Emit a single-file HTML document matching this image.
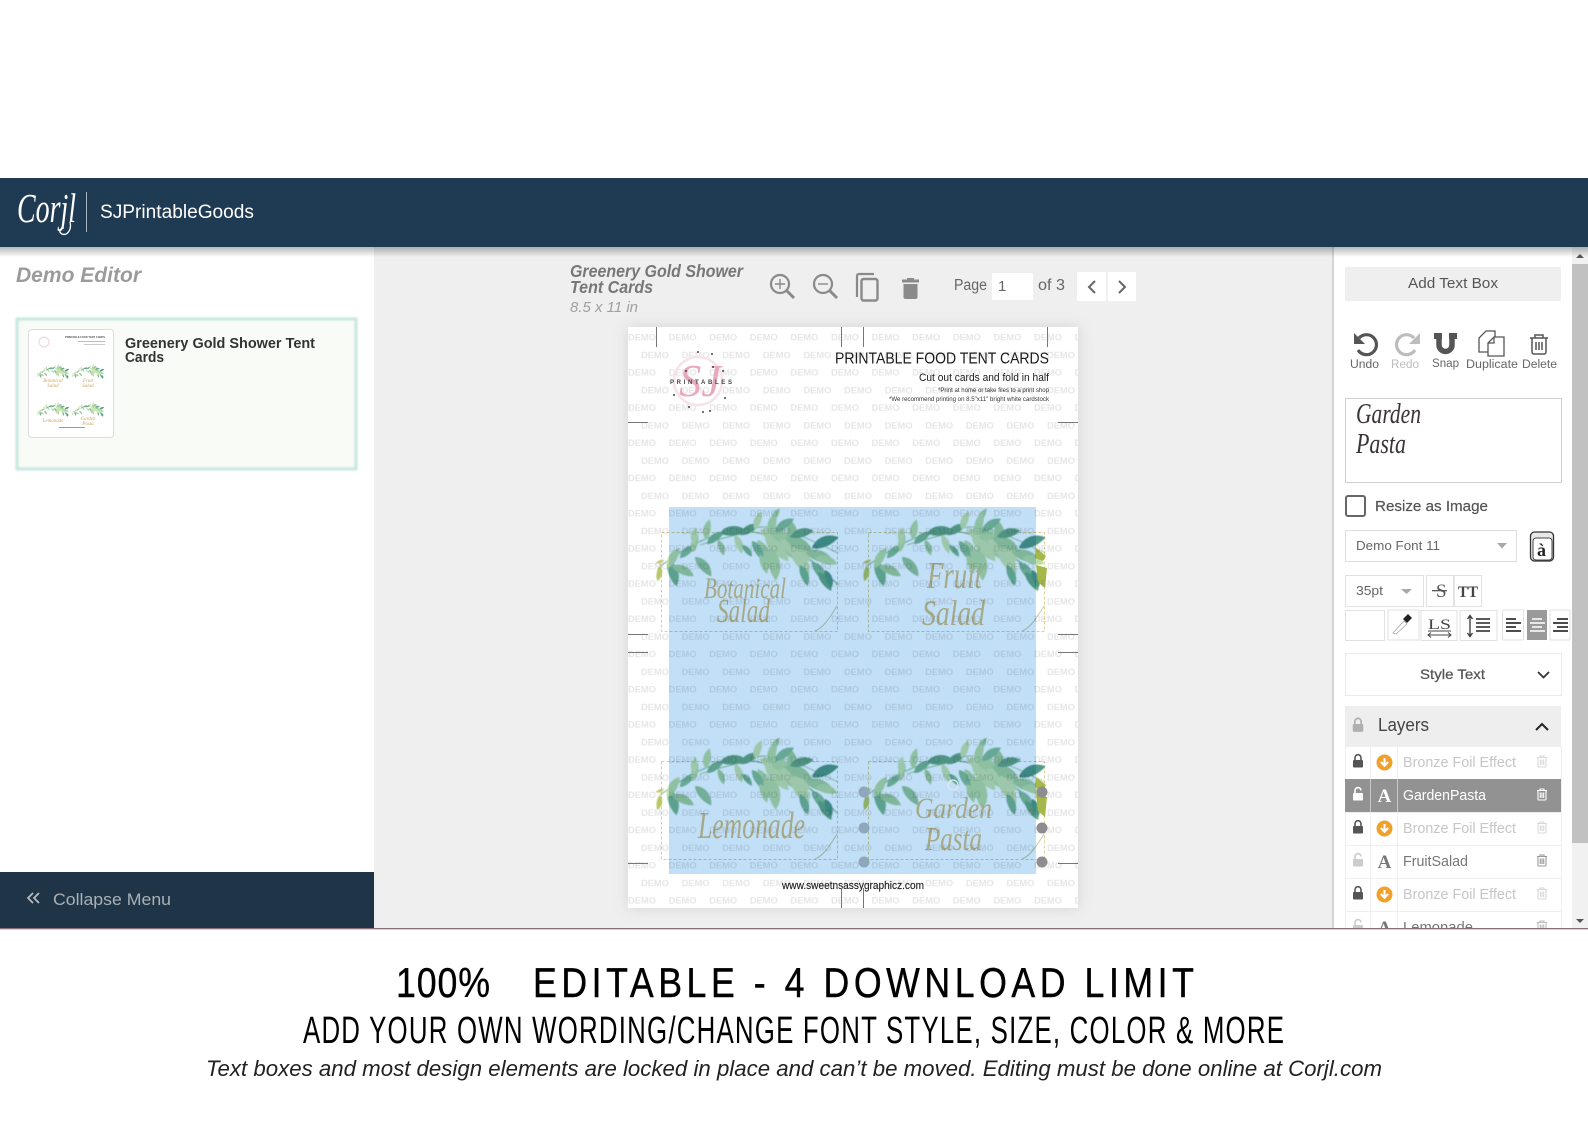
<!DOCTYPE html>
<html><head><meta charset="utf-8"><title>Corjl Demo Editor</title>
<style>
html,body{margin:0;padding:0;background:#fff;width:1588px;height:1134px;overflow:hidden}
svg{display:block;position:absolute;left:0;top:0;font-family:"Liberation Sans",sans-serif}
</style></head><body>
<svg xmlns="http://www.w3.org/2000/svg" width="1588" height="1134" viewBox="0 0 1588 1134">
<defs>
<filter id="b2" x="-10%" y="-10%" width="120%" height="120%"><feGaussianBlur stdDeviation="7"/></filter>
<filter id="b1" x="-5%" y="-5%" width="110%" height="110%"><feGaussianBlur stdDeviation="1"/></filter>
<filter id="soft"><feGaussianBlur stdDeviation=".4"/></filter>
<linearGradient id="hs" x1="0" y1="0" x2="0" y2="1"><stop offset="0" stop-color="#000" stop-opacity=".28"/><stop offset="1" stop-color="#000" stop-opacity="0"/></linearGradient>
<pattern id="demo" patternUnits="userSpaceOnUse" x="620" y="327" width="40.6" height="35.2">
<g font-weight="700" font-size="9.5" fill="#e6e6e8" font-family="Liberation Sans,sans-serif">
<text x="8" y="13.6" textLength="28" lengthAdjust="spacingAndGlyphs">DEMO</text>
<text x="21" y="31.2" textLength="28" lengthAdjust="spacingAndGlyphs">DEMO</text>
<text x="-19.6" y="31.2" textLength="28" lengthAdjust="spacingAndGlyphs">DEMO</text>
</g></pattern>
<clipPath id="pg"><rect x="628" y="327" width="450" height="581"/></clipPath>
<clipPath id="pnl"><rect x="1333" y="250" width="240" height="678"/></clipPath>
<path id="l" d="M0 0C5-6 15-7 22 0C15 4 5 4 0 0Z"/>
<g id="wreath" filter="url(#soft)">
<path d="M660 566C680 552 700 538 728 532C762 526 800 545 838 585" fill="none" stroke="#86bf9b" stroke-width="1.1"/>
<path d="M700 545C715 540 735 535 750 532M742 532C770 520 790 530 838 553M760 533C790 545 815 560 830 580" fill="none" stroke="#98c79f" stroke-width=".9"/>
<use href="#l" transform="translate(760 530) rotate(30) scale(1.8)" fill="#cfe4b0"/>
<use href="#l" transform="translate(770 525) rotate(55) scale(1.9)" fill="#bcdca8"/>
<use href="#l" transform="translate(780 540) rotate(35) scale(1.7)" fill="#cfe4b0"/>
<use href="#l" transform="translate(758 540) rotate(70) scale(1.4)" fill="#bcdca8"/>
<use href="#l" transform="translate(790 520) rotate(85) scale(1.3)" fill="#a8d0a0"/>
<use href="#l" transform="translate(772 522) rotate(-60) scale(.7)" fill="#a8d0a0"/>
<use href="#l" transform="translate(668 560) rotate(72) scale(1.25)" fill="#7ab895"/>
<use href="#l" transform="translate(664 560) rotate(160) scale(.4)" fill="#c8c878"/>
<use href="#l" transform="translate(660 566) rotate(100) scale(.7)" fill="#b8c868"/>
<use href="#l" transform="translate(668 568) rotate(-60) scale(1.05)" fill="#bcdca8"/>
<use href="#l" transform="translate(672 566) rotate(25) scale(1.1)" fill="#a8d0a0"/>
<use href="#l" transform="translate(680 558) rotate(-40) scale(.9)" fill="#86bf9b"/>
<use href="#l" transform="translate(695 557) rotate(50) scale(1.15)" fill="#98c79f"/>
<use href="#l" transform="translate(693 552) rotate(-75) scale(.85)" fill="#bcdca8"/>
<use href="#l" transform="translate(694 545) rotate(-85) scale(.8)" fill="#cfe4b0"/>
<use href="#l" transform="translate(706 540) rotate(-80) scale(.95)" fill="#bcdca8"/>
<use href="#l" transform="translate(707 544) rotate(-35) scale(.95)" fill="#7ab895"/>
<use href="#l" transform="translate(718 540) rotate(70) scale(.75)" fill="#a8d0a0"/>
<use href="#l" transform="translate(720 533) rotate(-5) scale(1.2)" fill="#68a988"/>
<use href="#l" transform="translate(740 535) rotate(-28) scale(1)" fill="#68a988"/>
<use href="#l" transform="translate(735 535) rotate(70) scale(.9)" fill="#cfe4b0"/>
<use href="#l" transform="translate(752 541) rotate(60) scale(1)" fill="#86bf9b"/>
<use href="#l" transform="translate(755 530) rotate(-70) scale(.9)" fill="#cfe4b0"/>
<use href="#l" transform="translate(770 535) rotate(-75) scale(1.05)" fill="#bcdca8"/>
<use href="#l" transform="translate(775 532) rotate(-35) scale(1.05)" fill="#86bf9b"/>
<use href="#l" transform="translate(765 538) rotate(45) scale(1.5)" fill="#cfe4b0"/>
<use href="#l" transform="translate(770 548) rotate(80) scale(1.5)" fill="#bcdca8"/>
<use href="#l" transform="translate(785 538) rotate(25) scale(1.35)" fill="#a8d0a0"/>
<use href="#l" transform="translate(790 537) rotate(-15) scale(1.1)" fill="#68a988"/>
<use href="#l" transform="translate(790 548) rotate(55) scale(1.5)" fill="#cfe4b0"/>
<use href="#l" transform="translate(812 548) rotate(-22) scale(1.3)" fill="#4f9a88"/>
<use href="#l" transform="translate(805 552) rotate(20) scale(1.4)" fill="#a8d0a0"/>
<use href="#l" transform="translate(812 562) rotate(55) scale(1.1)" fill="#86bf9b"/>
<use href="#l" transform="translate(818 572) rotate(55) scale(1.05)" fill="#68a988"/>
<use href="#l" transform="translate(800 565) rotate(70) scale(1)" fill="#7ab895"/>
<use href="#l" transform="translate(815 558) rotate(15) scale(1.05)" fill="#bcdca8"/>
<use href="#l" transform="translate(825 570) rotate(70) scale(.85)" fill="#4f9a88"/>
<use href="#l" transform="translate(760 555) rotate(70) scale(.9)" fill="#bcdca8"/>
<use href="#l" transform="translate(742 545) rotate(50) scale(.7)" fill="#7ab895"/>
</g>
<g id="lk"><rect x="-5" y="-1" width="10" height="7.5" rx="1"/><path d="M-3-1v-2.3a3 3 0 0 1 6 0v2.3" fill="none" stroke="currentColor" stroke-width="1.6"/></g>
<g id="ul"><rect x="-5" y="-1" width="10" height="7.5" rx="1"/><path d="M-3-1v-2.3a3 3 0 0 1 6-.3" fill="none" stroke="currentColor" stroke-width="1.6"/></g>
<g id="tr" fill="none" stroke="currentColor" stroke-width="1.1"><path d="M-5-3.5h10M-2-3.5v-1.5h4v1.5M-4-3.5v8.5a1 1 0 0 0 1 1h6a1 1 0 0 0 1-1v-8.5M-1.7-1.5v5.5M0-1.5v5.5M1.7-1.5v5.5"/></g>
<g id="dl"><circle r="8" fill="#f0a12a"/><path d="M0-4.5v7.5M-3.6-.5L0 3.2 3.6-.5" fill="none" stroke="#fff" stroke-width="2.1"/></g>
</defs>

<rect width="1588" height="1134" fill="#fff"/>
<g style="filter:blur(.35px)">
<rect x="0" y="178" width="1588" height="752" fill="#fff"/>
<rect x="374" y="247" width="960" height="681" fill="#efefef"/>
<rect x="0" y="247" width="374" height="681" fill="#fff"/>

<!-- left panel -->
<text x="16" y="282" font-size="21" font-weight="700" font-style="italic" fill="#9b9b9b" textLength="125" lengthAdjust="spacingAndGlyphs">Demo Editor</text>
<rect x="17" y="319" width="339" height="150" fill="#f9fbf6" stroke="#b7e2da" stroke-width="2.5" filter="url(#b1)"/>
<rect x="28.500" y="329.500" width="85" height="108" rx="3" fill="#fff" stroke="#dcdcdc"/>
<text x="65" y="338" font-size="2.600" font-weight="700" fill="#555" textLength="40" lengthAdjust="spacingAndGlyphs">PRINTABLE FOOD TENT CARDS</text>
<rect x="78" y="341" width="27" height="1" fill="#bbb"/><rect x="84" y="344" width="21" height="1" fill="#ccc"/>
<circle cx="44" cy="342" r="5" fill="none" stroke="#f0d0dc"/>
<g transform="translate(37.500 366) scale(.175) translate(-657 -518)"><use href="#wreath"/></g>
<g transform="translate(72.500 366) scale(.175) translate(-657 -518)"><use href="#wreath"/></g>
<g transform="translate(37.500 404) scale(.175) translate(-657 -518)"><use href="#wreath"/></g>
<g transform="translate(72.500 404) scale(.175) translate(-657 -518)"><use href="#wreath"/></g>
<g fill="#c9a860" font-size="5" font-family="Liberation Serif,serif" font-style="italic" text-anchor="middle">
<text x="53" y="382">Botanical</text><text x="53" y="387">Salad</text><text x="88" y="382">Fruit</text><text x="88" y="387">Salad</text>
<text x="53" y="422">Lemonade</text><text x="88" y="420">Garden</text><text x="88" y="425">Pasta</text></g>
<rect x="59" y="427" width="26" height="1" fill="#999"/>
<text x="125" y="348" font-size="14.500" font-weight="700" fill="#333" textLength="190" lengthAdjust="spacingAndGlyphs">Greenery Gold Shower Tent</text>
<text x="125" y="362" font-size="14.500" font-weight="700" fill="#333" textLength="39" lengthAdjust="spacingAndGlyphs">Cards</text>

<rect x="0" y="872" width="374" height="56" fill="#1f3547"/>
<path d="M33 893l-5 5 5 5M39 893l-5 5 5 5" fill="none" stroke="#b8bfc5" stroke-width="1.700"/>
<text x="53" y="905" font-size="17" fill="#a9b0b6" textLength="118" lengthAdjust="spacingAndGlyphs">Collapse Menu</text>

<!-- toolbar -->
<g fill="#777" font-style="italic" font-weight="700">
<text x="570" y="277" font-size="17.500" textLength="173" lengthAdjust="spacingAndGlyphs">Greenery Gold Shower</text>
<text x="570" y="293" font-size="17.500" textLength="83" lengthAdjust="spacingAndGlyphs">Tent Cards</text></g>
<text x="570" y="312" font-size="15" font-style="italic" fill="#a0a0a0" textLength="68" lengthAdjust="spacingAndGlyphs">8.5 x 11 in</text>
<g fill="none" stroke="#8a8a8a" stroke-width="2.200">
<circle cx="780" cy="284" r="9"/><path d="M786.500 290.500L794 298" stroke-width="3"/><path d="M775 284h10M780 279v10" stroke-width="1.400"/>
<circle cx="823" cy="284" r="9"/><path d="M829.500 290.500L837 298" stroke-width="3"/><path d="M818 284h10" stroke-width="1.400"/>
<path d="M857 297v-21a2 2 0 0 1 2-2h15" stroke-width="2.200"/><rect x="861.500" y="279" width="16" height="21.500" rx="2" stroke-width="2.400"/>
</g>
<path d="M902 279.500h5v-1.500h7v1.500h5v3h-17zM903.500 284h14v13a2 2 0 0 1-2 2h-10a2 2 0 0 1-2-2z" fill="#8a8a8a"/>
<text x="954" y="290" font-size="15.500" fill="#666" textLength="33" lengthAdjust="spacingAndGlyphs">Page</text>
<rect x="992" y="273" width="41" height="27" fill="#fff"/>
<text x="998" y="291" font-size="15" fill="#666">1</text>
<text x="1038" y="290" font-size="15.500" fill="#666" textLength="27" lengthAdjust="spacingAndGlyphs">of 3</text>
<rect x="1077" y="272" width="29" height="29" fill="#fff"/><rect x="1108" y="272" width="28" height="29" fill="#fff"/>
<path d="M1095 281l-6 6 6 6M1119 281l6 6-6 6" fill="none" stroke="#666" stroke-width="2"/>

<!-- sheet -->
<rect x="628" y="327" width="450" height="581" fill="#bbb" opacity=".55" filter="url(#b2)"/>
<rect x="628" y="327" width="450" height="581" fill="#fff"/>
<g clip-path="url(#pg)">
<g fill="none" stroke="#dccf98" stroke-width="1" stroke-dasharray="3 2">
<rect x="661.500" y="532.500" width="176" height="99"/><rect x="868.500" y="532.500" width="176" height="99"/>
<rect x="661.500" y="761.500" width="176" height="98"/><rect x="868.500" y="761.500" width="176" height="98"/></g>
<path d="M815 631c8-3 14-12 22-25M1022 631c8-3 14-12 22-25M815 859c8-3 14-12 22-25M1022 859c8-3 14-12 22-25" fill="none" stroke="#cdcba8"/>
<use href="#wreath"/>
<use href="#wreath" transform="translate(207 0)"/>
<use href="#wreath" transform="translate(0 229)"/>
<use href="#wreath" transform="translate(207 229)"/>
<path d="M1036 548l10 8-3 5-8-3zM1036 565l11 3-2 20-7-6z" fill="#a6b84a"/>
<path d="M1036 777l10 8-3 5-8-3zM1036 794l11 3-2 20-7-6z" fill="#a6b84a"/>
<g font-family="Liberation Serif,serif" font-style="italic" fill="#dcc18c">
<text x="704" y="598" textLength="82" lengthAdjust="spacingAndGlyphs" font-size="30">Botanical</text>
<text x="717" y="622" textLength="53" lengthAdjust="spacingAndGlyphs" font-size="34">Salad</text>
<text x="927" y="588" textLength="55" lengthAdjust="spacingAndGlyphs" font-size="38">Fruit</text>
<text x="922" y="625" textLength="63" lengthAdjust="spacingAndGlyphs" font-size="36">Salad</text>
<text x="698" y="838" textLength="107" lengthAdjust="spacingAndGlyphs" font-size="38">Lemonade</text>
<text x="915" y="818" textLength="77" lengthAdjust="spacingAndGlyphs" font-size="30">Garden</text>
<text x="925" y="850" textLength="57" lengthAdjust="spacingAndGlyphs" font-size="34">Pasta</text></g>
<rect x="620" y="327" width="470" height="581" fill="url(#demo)" style="mix-blend-mode:multiply"/>
<text x="835" y="363.500" font-size="15.500" fill="#1a1a1a" textLength="214" lengthAdjust="spacingAndGlyphs">PRINTABLE FOOD TENT CARDS</text>
<text x="919" y="381" font-size="11" fill="#1a1a1a" textLength="130" lengthAdjust="spacingAndGlyphs">Cut out cards and fold in half</text>
<text x="938" y="392" font-size="6" fill="#333" textLength="111" lengthAdjust="spacingAndGlyphs">*Print at home or take files to a print shop</text>
<text x="889" y="401" font-size="6" fill="#333" textLength="160" lengthAdjust="spacingAndGlyphs">*We recommend printing on 8.5"x11" bright white cardstock</text>
<circle cx="698" cy="381" r="24" fill="none" stroke="#f6e2e9" stroke-width="2.500"/>
<text x="679" y="396" font-family="Liberation Serif,serif" font-style="italic" font-size="46" fill="#e8a9c0" textLength="42" lengthAdjust="spacingAndGlyphs">SJ</text>
<text x="670" y="384" font-size="6" font-weight="700" fill="#444" textLength="62">PRINTABLES</text>
<g fill="#444"><circle cx="686" cy="371" r="1"/><circle cx="698" cy="352" r="1"/><circle cx="723" cy="371" r="1"/><circle cx="713" cy="367" r="1"/><circle cx="674" cy="395" r="1"/><circle cx="725" cy="398" r="1"/><circle cx="689" cy="407" r="1"/><circle cx="710" cy="411" r="1"/><circle cx="703" cy="412" r="1"/><circle cx="712" cy="354" r="1"/></g>
<text x="782" y="889" font-size="10.800" fill="#222" stroke="#222" stroke-width=".15" textLength="142" lengthAdjust="spacingAndGlyphs">www.sweetnsassygraphicz.com</text>
<rect x="669" y="507" width="367" height="367" fill="#c1dff6" style="mix-blend-mode:multiply"/>
<g fill="#8d8d8f"><circle cx="1042" cy="792" r="5.500"/><circle cx="1042" cy="828" r="5.500"/><circle cx="1042" cy="862" r="5.500"/></g>
<g fill="#8fa6bb"><circle cx="864" cy="792" r="5.500"/><circle cx="864" cy="828" r="5.500"/><circle cx="864" cy="862" r="5.500"/></g>
<circle cx="953" cy="785" r="5" fill="none" stroke="#dfe9ee" stroke-width="1.200"/>
<g stroke="#777" stroke-width="1" fill="none">
<path d="M656.500 327v20M841.500 327v20M863.500 327v20M1047.500 327v20M841.500 888v20M863.500 888v20"/>
<path d="M628 422.500h20M1058 422.500h20M628 634.500h20M1058 634.500h20M628 652.500h20M1058 652.500h20M628 863.500h20M1058 863.500h20"/></g>
</g>

<!-- right panel -->
<rect x="1332" y="247" width="2" height="681" fill="#d4d4d4"/>
<rect x="1334" y="247" width="238" height="681" fill="#fff"/>
<rect x="1572" y="247" width="16" height="681" fill="#f1f1f1"/>
<rect x="1572" y="264" width="16" height="579" fill="#c1c1c1"/>
<path d="M1580 254l-4 4h8zM1580 923l-4-4h8z" fill="#555"/>
<rect x="1345" y="267" width="216" height="34" fill="#efefef"/>
<text x="1408" y="288" font-size="15" fill="#555" textLength="90" lengthAdjust="spacingAndGlyphs">Add Text Box</text>

<path d="M1359 338a10 10 0 1 1-1 12" fill="none" stroke="#555" stroke-width="3.200"/>
<path d="M1354 333v11h11z" fill="#555"/>
<path d="M1414 338a10 10 0 1 0 1 12" fill="none" stroke="#bdbdbd" stroke-width="3.200"/>
<path d="M1420 333v11h-11z" fill="#bdbdbd"/>
<path d="M1439 338v7a6.500 6.500 0 0 0 13 0v-7" fill="none" stroke="#555" stroke-width="5.500"/>
<rect x="1434" y="333" width="8" height="6" fill="#555"/><rect x="1449" y="333" width="8" height="6" fill="#555"/>
<path d="M1488 352h-9v-14l7-7h9v6" fill="none" stroke="#555" stroke-width="1.300"/>
<path d="M1494 337h10v19h-16v-13z" fill="#fff" stroke="#555" stroke-width="1.300"/><path d="M1494 337v6h-6" fill="none" stroke="#555" stroke-width="1.200"/>
<path d="M1530 338h18M1535 338v-3h8v3M1532 338v14a2 2 0 0 0 2 2h10a2 2 0 0 0 2-2v-14M1536 342v8M1539 342v8M1542 342v8" fill="none" stroke="#555" stroke-width="1.500"/>
<g font-size="11.500" fill="#666" font-weight="400">
<text x="1350" y="368" textLength="29" lengthAdjust="spacingAndGlyphs">Undo</text>
<text x="1391" y="368" textLength="28" fill="#bcbcbc" lengthAdjust="spacingAndGlyphs">Redo</text>
<text x="1432" y="367" textLength="27" lengthAdjust="spacingAndGlyphs">Snap</text>
<text x="1466" y="368" textLength="52" lengthAdjust="spacingAndGlyphs">Duplicate</text>
<text x="1522" y="368" textLength="35" lengthAdjust="spacingAndGlyphs">Delete</text></g>

<rect x="1345.500" y="398.500" width="216" height="84" fill="#fff" stroke="#cfcfcf"/>
<g font-family="Liberation Serif,serif" font-style="italic" fill="#3a3434">
<text x="1356" y="423" font-size="29" textLength="65" lengthAdjust="spacingAndGlyphs">Garden</text>
<text x="1356" y="453" font-size="29" textLength="50" lengthAdjust="spacingAndGlyphs">Pasta</text></g>

<rect x="1346" y="496" width="19" height="20" rx="2" fill="#fff" stroke="#666" stroke-width="2"/>
<text x="1375" y="511" font-size="15" fill="#555" stroke="#555" stroke-width=".2" textLength="113" lengthAdjust="spacingAndGlyphs">Resize as Image</text>
<rect x="1345.500" y="530.500" width="171" height="31" fill="#fff" stroke="#dedede"/>
<text x="1356" y="550" font-size="13" fill="#666" textLength="84" lengthAdjust="spacingAndGlyphs">Demo Font 11</text>
<path d="M1497 543h10l-5 5.500z" fill="#a8a8a8"/>
<rect x="1530.500" y="532" width="23" height="29" rx="4" fill="#e8e8e8" stroke="#333" stroke-width="1.300"/>
<rect x="1533" y="538" width="19" height="22" rx="3" fill="#fff" stroke="#444"/>
<text x="1537" y="556" font-size="18" font-weight="700" fill="#222" font-family="Liberation Serif,serif">à</text>

<g fill="#fff" stroke="#e2e2e2">
<rect x="1345.500" y="575.500" width="78" height="31"/>
<rect x="1426.500" y="575.500" width="27" height="31"/>
<rect x="1454.500" y="575.500" width="27" height="31"/>
<rect x="1345.500" y="610.500" width="39" height="30"/>
<rect x="1388" y="610" width="31" height="30"/>
<rect x="1421" y="610.500" width="36" height="30"/>
<rect x="1460" y="610.500" width="37" height="30"/>
<rect x="1502.500" y="610" width="21" height="30" rx="1"/>
<rect x="1550" y="610" width="20" height="30" rx="1"/></g>
<rect x="1527" y="610" width="20" height="30" fill="#9a9a9a"/>
<text x="1356" y="595" font-size="13" fill="#666" textLength="27" lengthAdjust="spacingAndGlyphs">35pt</text>
<path d="M1401 589h11l-5.500 5z" fill="#a8a8a8"/>
<text x="1436" y="597" font-size="19" fill="#555" font-family="Liberation Serif,serif">S</text>
<rect x="1432" y="590" width="15" height="1.300" fill="#555"/>
<text x="1458" y="597" font-size="16" font-weight="700" fill="#444" font-family="Liberation Serif,serif" textLength="20" lengthAdjust="spacingAndGlyphs">TT</text>
<path d="M1396 634l-3-1 11-12 3 3z" fill="#fff" stroke="#aaa" stroke-width=".8"/><path d="M1403 619l5-5 4 4-5 5z" fill="#222"/>
<text x="1428" y="629" font-size="15" fill="#444" font-family="Liberation Serif,serif" textLength="23" lengthAdjust="spacingAndGlyphs">LS</text>
<path d="M1428 631h23M1428 635h23M1431 632.500l-3 2.500 3 2.500M1448 632.500l3 2.500-3 2.500" fill="none" stroke="#444"/>
<path d="M1470 616v20M1467.500 619l2.500-3.500 2.500 3.500M1467.500 633l2.500 3.500 2.500-3.500" fill="none" stroke="#444" stroke-width="1.400"/>
<path d="M1476 619h14M1476 623h14M1476 627h14M1476 631h14" stroke="#444" stroke-width="1.700"/>
<path d="M1506 619h10M1506 623h15M1506 627h10M1506 631h15" stroke="#333" stroke-width="1.800"/>
<path d="M1532 619h10M1530 623h15M1532 627h10M1530 631h15" stroke="#f2f2f2" stroke-width="1.800"/>
<path d="M1557 619h11M1553 623h15M1557 627h11M1553 631h15" stroke="#333" stroke-width="1.800"/>

<rect x="1345.500" y="653.500" width="216" height="42" fill="#fff" stroke="#ebebeb"/>
<text x="1420" y="679" font-size="14" fill="#555" stroke="#555" stroke-width=".25" textLength="65" lengthAdjust="spacingAndGlyphs">Style Text</text>
<path d="M1538 672l5.500 5.500 5.500-5.500" fill="none" stroke="#333" stroke-width="1.800"/>

<g clip-path="url(#pnl)">
<rect x="1345" y="706" width="216" height="40" fill="#eeeeee"/>
<use href="#lk" transform="translate(1358 725) scale(1.05)" fill="#b0b0b0" color="#b0b0b0"/>
<text x="1378" y="731" font-size="18" fill="#444" textLength="51" lengthAdjust="spacingAndGlyphs">Layers</text>
<path d="M1536 730l6-6 6 6" fill="none" stroke="#222" stroke-width="2"/>
<rect x="1345.500" y="746.500" width="216" height="182" fill="#fff" stroke="#efefef"/>
<path d="M1345 779.500h216M1345 812.500h216M1345 845.500h216M1345 878.500h216M1345 911.500h216M1370.500 746v182M1397.500 746v182" stroke="#efefef"/>
<rect x="1345" y="779" width="216" height="33" fill="#929292"/>
<path d="M1370.500 779v33M1397.500 779v33" stroke="#c9c9c9"/>
<use href="#lk" transform="translate(1358 761)" fill="#555" color="#555"/>
<use href="#ul" transform="translate(1358 794)" fill="#fff" color="#fff"/>
<use href="#lk" transform="translate(1358 827)" fill="#555" color="#555"/>
<use href="#ul" transform="translate(1358 860)" fill="#ccc" color="#ccc"/>
<use href="#lk" transform="translate(1358 893)" fill="#555" color="#555"/>
<use href="#ul" transform="translate(1358 926)" fill="#ccc" color="#ccc"/>
<use href="#dl" transform="translate(1384.500 762.500)"/>
<use href="#dl" transform="translate(1384.500 828.500)"/>
<use href="#dl" transform="translate(1384.500 894.500)"/>
<g font-family="Liberation Serif,serif" font-weight="700" font-size="19" text-anchor="middle">
<text x="1384.500" y="802" fill="#fff">A</text><text x="1384.500" y="868" fill="#777">A</text><text x="1384.500" y="934" fill="#777">A</text></g>
<g font-size="14.500">
<text x="1403" y="767" fill="#c6c6c6" textLength="113" lengthAdjust="spacingAndGlyphs">Bronze Foil Effect</text>
<text x="1403" y="800" fill="#fff" textLength="83" lengthAdjust="spacingAndGlyphs">GardenPasta</text>
<text x="1403" y="833" fill="#c6c6c6" textLength="113" lengthAdjust="spacingAndGlyphs">Bronze Foil Effect</text>
<text x="1403" y="866" fill="#777" textLength="65" lengthAdjust="spacingAndGlyphs">FruitSalad</text>
<text x="1403" y="899" fill="#c6c6c6" textLength="113" lengthAdjust="spacingAndGlyphs">Bronze Foil Effect</text>
<text x="1403" y="932" fill="#777" textLength="70" lengthAdjust="spacingAndGlyphs">Lemonade</text></g>
<use href="#tr" transform="translate(1542 761)" color="#d8d8d8"/>
<use href="#tr" transform="translate(1542 794)" color="#fff"/>
<use href="#tr" transform="translate(1542 827)" color="#d8d8d8"/>
<use href="#tr" transform="translate(1542 860)" color="#999"/>
<use href="#tr" transform="translate(1542 893)" color="#d8d8d8"/>
<use href="#tr" transform="translate(1542 926)" color="#bbb"/>
</g>

<!-- header -->
<rect x="0" y="247" width="1588" height="10" fill="url(#hs)"/>
<rect x="0" y="178" width="1588" height="69" fill="#1f3b53"/>
<text x="17" y="222" font-size="41" fill="#fff" font-family="Liberation Serif,serif" font-style="italic" textLength="59" lengthAdjust="spacingAndGlyphs">Corjl</text>
<path d="M70 222c2 8-3 14-8 12-4-2-2-6 2-6" fill="none" stroke="#fff" stroke-width="1.300"/>
<rect x="86" y="192" width="1" height="40" fill="#aab6c0"/>
<text x="100" y="218" font-size="19" fill="#fff" textLength="154" lengthAdjust="spacingAndGlyphs">SJPrintableGoods</text>

<rect x="0" y="928" width="1588" height="1.300" fill="#8a6e7a"/>
</g>

<!-- caption -->
<g fill="#000">
<text transform="translate(396 997) scale(.85 1)" font-size="42" stroke="#000" stroke-width=".4" textLength="110.600" lengthAdjust="spacing">100%</text>
<text transform="translate(533 997) scale(.85 1)" font-size="42" stroke="#000" stroke-width=".4" textLength="777.600" lengthAdjust="spacing">EDITABLE - 4 DOWNLOAD LIMIT</text>
<text transform="translate(303 1043) scale(.68 1)" font-size="38" textLength="1442.600" lengthAdjust="spacing">ADD YOUR OWN WORDING/CHANGE FONT STYLE, SIZE, COLOR &amp; MORE</text>
<text x="206" y="1076" font-size="22" font-style="italic" fill="#222" textLength="1176" lengthAdjust="spacingAndGlyphs">Text boxes and most design elements are locked in place and can’t be moved. Editing must be done online at Corjl.com</text>
</g>
</svg>
</body></html>
